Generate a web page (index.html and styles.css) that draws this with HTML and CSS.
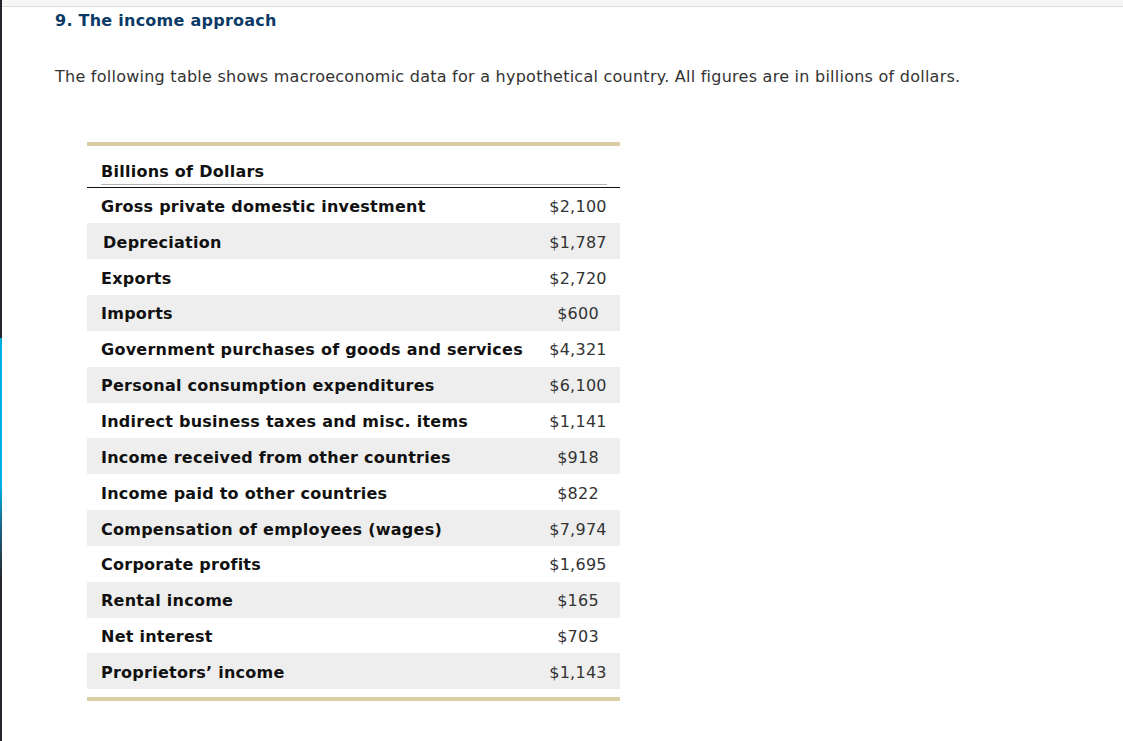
FILE: index.html
```html
<!DOCTYPE html>
<html>
<head>
<meta charset="utf-8">
<link rel="stylesheet" href="styles.css">
</head>
<body>
<div class="shell">
  <div class="rail">
    <div class="rail-top"></div>
    <div class="rail-accent"></div>
    <div class="rail-bottom"></div>
  </div>
  <div class="main">
    <div class="topbar"></div>
    <div class="content">
      <h2 class="title">9. The income approach</h2>
      <p class="intro">The following table shows macroeconomic data for a hypothetical country. All figures are in billions of dollars.</p>
      <div class="table-wrap">
        <table class="data">
          <thead>
            <tr><th colspan="2"><div class="head-inner">Billions of Dollars</div></th></tr>
          </thead>
          <tbody>
            <tr><td class="label">Gross private domestic investment</td><td class="val">$2,100</td></tr>
            <tr><td class="label indent">Depreciation</td><td class="val">$1,787</td></tr>
            <tr><td class="label">Exports</td><td class="val">$2,720</td></tr>
            <tr><td class="label">Imports</td><td class="val">$600</td></tr>
            <tr><td class="label">Government purchases of goods and services</td><td class="val">$4,321</td></tr>
            <tr><td class="label">Personal consumption expenditures</td><td class="val">$6,100</td></tr>
            <tr><td class="label">Indirect business taxes and misc. items</td><td class="val">$1,141</td></tr>
            <tr><td class="label">Income received from other countries</td><td class="val">$918</td></tr>
            <tr><td class="label">Income paid to other countries</td><td class="val">$822</td></tr>
            <tr><td class="label">Compensation of employees (wages)</td><td class="val">$7,974</td></tr>
            <tr><td class="label">Corporate profits</td><td class="val">$1,695</td></tr>
            <tr><td class="label">Rental income</td><td class="val">$165</td></tr>
            <tr><td class="label">Net interest</td><td class="val">$703</td></tr>
            <tr><td class="label">Proprietors’ income</td><td class="val">$1,143</td></tr>
          </tbody>
        </table>
      </div>
    </div>
  </div>
</div>
</body>
</html>
```

FILE: styles.css
```css
html, body {
  margin: 0;
  padding: 0;
  background: #ffffff;
}

body {
  font-family: "DejaVu Sans", Verdana, sans-serif;
  font-size: 16px;
  letter-spacing: 0.25px;
  color: #333333;
}

.shell {
  display: flex;
  min-height: 741px;
}

.rail {
  width: 2px;
  flex: none;
  display: flex;
  flex-direction: column;
  background: #23272c;
}

.rail-top {
  height: 338px;
  background: #23272c;
}

.rail-accent {
  height: 240px;
  background: linear-gradient(to bottom, #00aee6 0%, #00aee6 62%, #1e5f80 80%, #23272c 100%);
}

.rail-bottom {
  flex: 1;
  background: #23272c;
}

.main {
  flex: 1;
  min-width: 0;
}

.topbar {
  height: 6px;
  background: #f6f6f6;
  border-bottom: 1px solid #dedede;
}

.content {
  padding: 0 0 0 53px;
}

.title {
  margin: 0;
  padding-top: 4px;
  font-size: 16px;
  line-height: 20px;
  font-weight: bold;
  color: #0b3a66;
}

.intro {
  margin: 0;
  padding-top: 36px;
  font-size: 16px;
  line-height: 20px;
  color: #333333;
}

.table-wrap {
  margin: 55px 0 0 32px;
  width: 533px;
  border-top: 4px solid #d9cea4;
  border-bottom: 4px solid #d9cea4;
  padding-bottom: 8px;
}

.data {
  width: 100%;
  border-collapse: collapse;
}

.data th {
  padding: 0 13px 0 14px;
  text-align: left;
  border-bottom: 1px solid #111111;
}

.head-inner {
  padding-top: 16px;
  padding-bottom: 2px;
  margin-bottom: 2px;
  border-bottom: 1px solid #b4b4b4;
  font-size: 16px;
  line-height: 20px;
  font-weight: bold;
  color: #111111;
}

.data td {
  box-sizing: border-box;
  height: 35.85px;
  padding: 3px 0 0 0;
  font-size: 16px;
  line-height: 20px;
  vertical-align: middle;
}

.data tbody tr:nth-child(even) td {
  background: #eeeeee;
}

.label {
  padding-left: 14px !important;
  font-weight: bold;
  color: #111111;
}

.label.indent {
  padding-left: 16px !important;
}

.val {
  width: 84px;
  text-align: center;
  color: #333333;
}
```
